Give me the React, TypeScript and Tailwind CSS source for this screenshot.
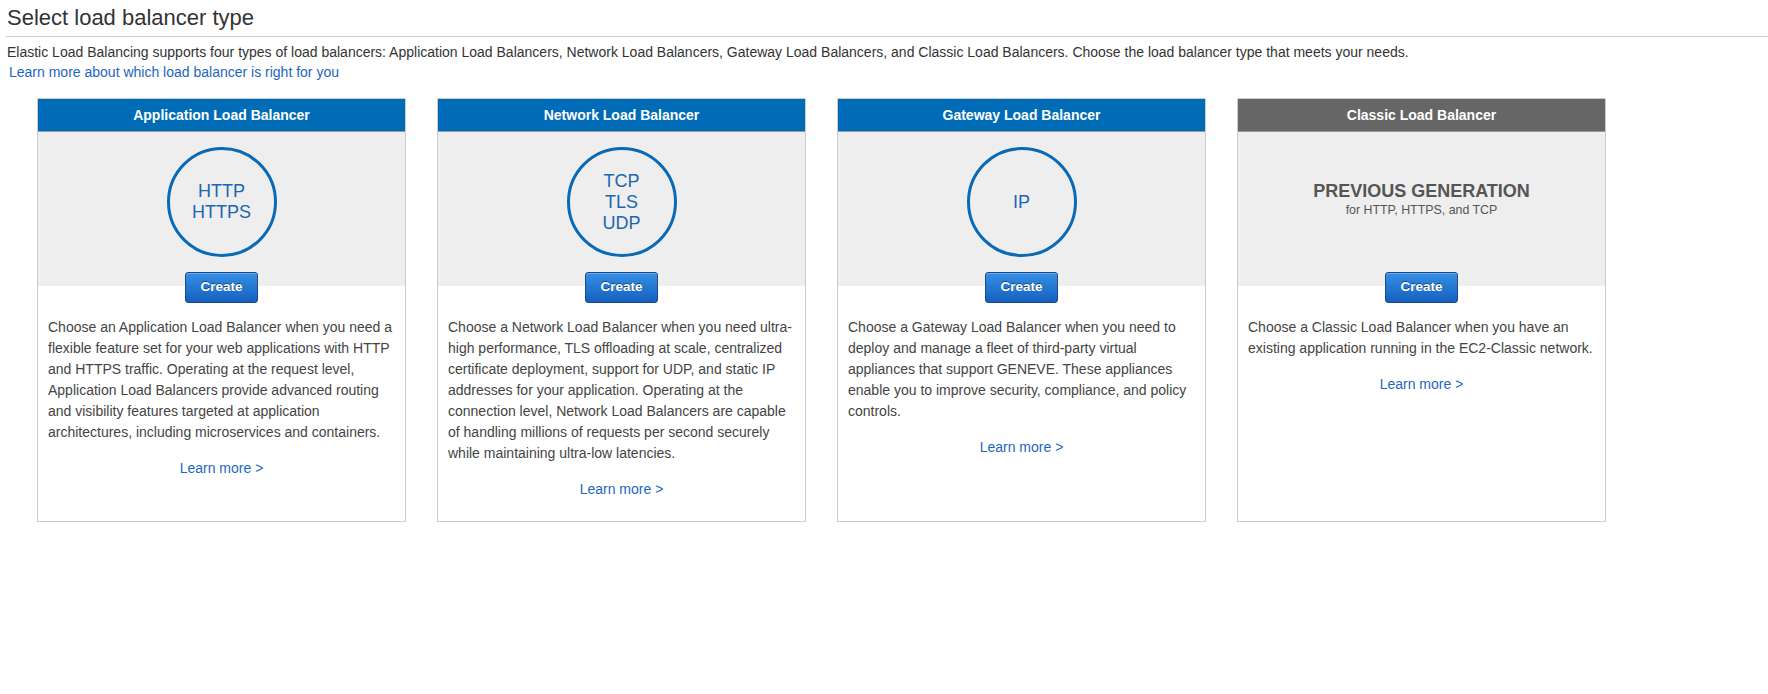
const FONT = { fontFamily: '"Liberation Sans", Arial, Helvetica, sans-serif' };

type Balancer = {
  title: string;
  classic?: boolean;
  protocols: string[];
  description: string;
};

const BALANCERS: Balancer[] = [
  {
    title: "Application Load Balancer",
    protocols: ["HTTP", "HTTPS"],
    description:
      "Choose an Application Load Balancer when you need a flexible feature set for your web applications with HTTP and HTTPS traffic. Operating at the request level, Application Load Balancers provide advanced routing and visibility features targeted at application architectures, including microservices and containers.",
  },
  {
    title: "Network Load Balancer",
    protocols: ["TCP", "TLS", "UDP"],
    description:
      "Choose a Network Load Balancer when you need ultra-high performance, TLS offloading at scale, centralized certificate deployment, support for UDP, and static IP addresses for your application. Operating at the connection level, Network Load Balancers are capable of handling millions of requests per second securely while maintaining ultra-low latencies.",
  },
  {
    title: "Gateway Load Balancer",
    protocols: ["IP"],
    description:
      "Choose a Gateway Load Balancer when you need to deploy and manage a fleet of third-party virtual appliances that support GENEVE. These appliances enable you to improve security, compliance, and policy controls.",
  },
  {
    title: "Classic Load Balancer",
    classic: true,
    protocols: [],
    description:
      "Choose a Classic Load Balancer when you have an existing application running in the EC2-Classic network.",
  },
];

function BalancerCard({ item }: { item: Balancer }) {
  return (
    <div className="flex w-[369px] flex-col border border-[#cccccc] bg-white">
      <div
        className={`flex h-[33px] items-center justify-center border-b border-[#999999] text-[14px] font-bold text-white ${
          item.classic ? "bg-[#666666]" : "bg-[#006cb7]"
        }`}
      >
        {item.title}
      </div>
      <div className="flex h-[154px] flex-col items-center bg-[#eeeeee] pt-[15px]">
        {item.classic ? (
          <div className="flex flex-col items-center pt-[33px] text-[#555555]">
            <div className="text-[18px] font-bold leading-[22px]">PREVIOUS GENERATION</div>
            <div className="mt-[1px] text-[12.4px] leading-[15px]">for HTTP, HTTPS, and TCP</div>
          </div>
        ) : (
          <div className="flex h-[110px] w-[110px] flex-col items-center justify-center rounded-full border-[3px] border-[#0b6ab6] text-[18px] leading-[21px] text-[#1a67b3]">
            {item.protocols.map((p) => (
              <span key={p}>{p}</span>
            ))}
          </div>
        )}
      </div>
      <div className="-mt-[14px] flex justify-center">
        <button
          type="button"
          className="h-[31px] w-[73px] rounded-[3px] border border-[#19498a] bg-gradient-to-b from-[#3690e6] to-[#1460be] text-[13.5px] font-bold text-white [text-shadow:0_-1px_0_rgba(0,0,0,0.45)] shadow-[inset_0_1px_0_rgba(255,255,255,0.25)]"
        >
          Create
        </button>
      </div>
      <div className="flex flex-1 flex-col px-[10px] pb-[21px] pt-[14px]">
        <p className="text-[14px] leading-[21px] text-[#444444]">{item.description}</p>
        <a className="mt-[15px] text-center text-[14px] leading-[21px] text-[#1e66c0]" href="#">
          Learn more &gt;
        </a>
      </div>
    </div>
  );
}

export default function App() {
  return (
    <div className="min-h-screen bg-white pb-10 text-[#333333]" style={FONT}>
      <h1 className="px-[7px] pt-[5px] text-[22px] font-normal leading-[25px] text-[#333333]">
        Select load balancer type
      </h1>
      <div className="ml-[6px] mt-[6px] border-t border-[#cccccc]" />
      <p className="ml-[7px] mt-[6px] text-[14px] leading-[18px] text-[#333333]">
        Elastic Load Balancing supports four types of load balancers: Application Load Balancers,
        Network Load Balancers, Gateway Load Balancers, and Classic Load Balancers. Choose the load
        balancer type that meets your needs.
      </p>
      <a className="ml-[9px] mt-[1px] block text-[14px] leading-[20px] text-[#1e66c0]" href="#">
        Learn more about which load balancer is right for you
      </a>
      <div className="ml-[37px] mt-[16px] flex gap-[31px]">
        {BALANCERS.map((b) => (
          <BalancerCard key={b.title} item={b} />
        ))}
      </div>
    </div>
  );
}
